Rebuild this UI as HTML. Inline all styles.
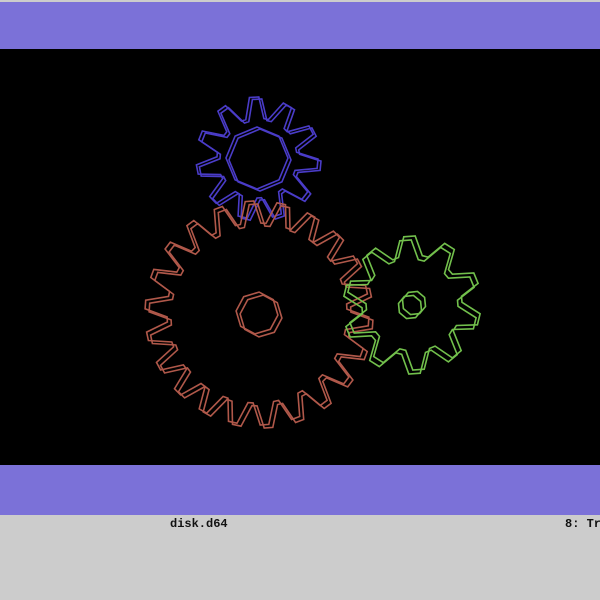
<!DOCTYPE html>
<html><head><style>
html,body{margin:0;padding:0;width:600px;height:600px;overflow:hidden;background:#cccccc;}
#top{position:absolute;left:0;top:2px;width:600px;height:48px;background:#7b71d8;}
#scr{position:absolute;left:0;top:49px;width:600px;height:416px;background:#000;}
#bot{position:absolute;left:0;top:465px;width:600px;height:50px;background:#7b71d8;}
.t{position:absolute;top:517px;font:bold 12px "Liberation Mono",monospace;color:#111;white-space:nowrap;}
svg{position:absolute;left:0;top:0;}
</style></head><body>
<div id="top"></div><div id="scr"></div><div id="bot"></div>
<div class="t" style="left:170px">disk.d64</div>
<div class="t" style="left:565px">8: Tr</div>
<svg id="g" width="600" height="600" viewBox="0 0 600 600"></svg>
<script>
function gear(cx,cy,n,ro,ri,rh,rot,col,dx,dy){
  var pts=[];
  for(var i=0;i<n;i++){
    var a=rot+i*2*Math.PI/n, s=2*Math.PI/n;
    [[ri,-0.5*s],[ro,-0.22*s],[ro,0.05*s],[ri,0.3*s]].forEach(function(p){
      var ang=a+p[1];pts.push([cx+p[0]*Math.cos(ang),cy+p[0]*Math.sin(ang)]);
    });
  }
  var h=[];for(var k=0;k<8;k++){var ang=rot+k*Math.PI/4;h.push([cx+rh*Math.cos(ang),cy+rh*Math.sin(ang)]);}
  var out='';
  [[0,0],[dx,dy]].forEach(function(o){
    out+='<polygon points="'+pts.map(function(p){return (p[0]+o[0]).toFixed(1)+','+(p[1]+o[1]).toFixed(1)}).join(' ')+'" fill="none" stroke="'+col+'" stroke-width="1.6"/>';
    out+='<polygon points="'+h.map(function(p){return (p[0]+o[0]).toFixed(1)+','+(p[1]+o[1]).toFixed(1)}).join(' ')+'" fill="none" stroke="'+col+'" stroke-width="1.6"/>';
  });
  return out;
}
var s='';
s+=gear(257,158,11,61,40,31,-1.57,'#4a3cc8',3,2);
s+=gear(257,313,22,112,90,21,0.1,'#b0584a',4,3);
s+=gear(410,307,10,67,48,12,0.3,'#72c04c',4,-4);
document.getElementById('g').innerHTML=s;
</script>
</body></html>
